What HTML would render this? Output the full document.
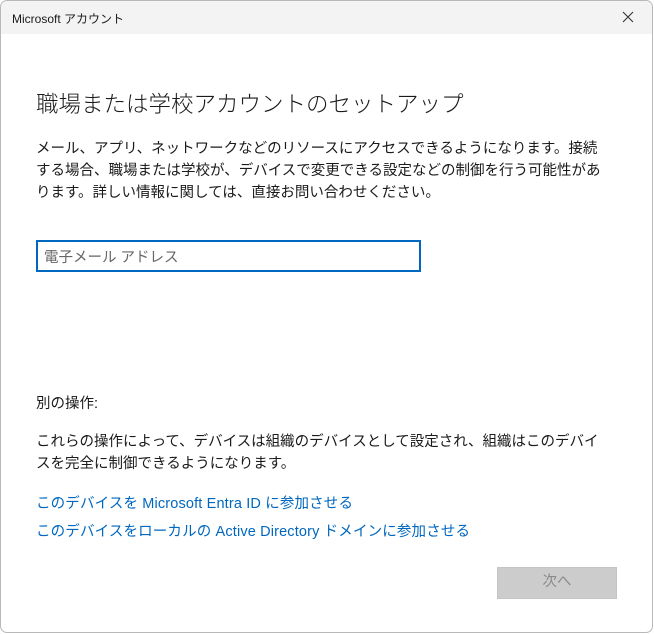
<!DOCTYPE html>
<html><head><meta charset="utf-8"><style>
*{margin:0;padding:0;box-sizing:border-box}
html,body{width:654px;height:634px;overflow:hidden;background:#fff}
body{font-family:"Liberation Sans","Noto Sans CJK JP",sans-serif;color:#1a1a1a}
.win{position:absolute;left:0;top:0;width:653px;height:633px;border:1px solid #b8b8b8;border-radius:7px;overflow:hidden;background:#fff}
.tb{height:33px;background:#f3f3f3;position:relative}
.tb span{position:absolute;left:11px;top:9px;font-size:12px;color:#1a1a1a}
.abs{position:absolute;white-space:nowrap}
.p{font-size:14.5px;line-height:22px}
a{color:#0067c0;text-decoration:none}
</style></head><body>
<div class="win">
<div class="tb"><span>Microsoft アカウント</span>
<svg style="position:absolute;right:18px;top:10px" width="12" height="12" viewBox="0 0 12 12"><path d="M1 1L11 11M11 1L1 11" stroke="#333" stroke-width="1.1"/></svg></div>
<div class="abs" style="left:35px;top:86px;font-size:22.5px;font-weight:300;color:#1a1a1a">職場または学校アカウントのセットアップ</div>
<div class="abs p" style="left:35px;top:137px">メール、アプリ、ネットワークなどのリソースにアクセスできるようになります。接続<br>する場合、職場または学校が、デバイスで変更できる設定などの制御を行う可能性があ<br>ります。詳しい情報に関しては、直接お問い合わせください。</div>
<div class="abs" style="left:35px;top:239px;width:385px;height:32px;border:2px solid #0067c0;font-size:14.5px;color:#666;padding:4px 0 0 6px">電子メール アドレス</div>
<div class="abs p" style="left:35px;top:392px">別の操作:</div>
<div class="abs p" style="left:35px;top:430px">これらの操作によって、デバイスは組織のデバイスとして設定され、組織はこのデバイ<br>スを完全に制御できるようになります。</div>
<div class="abs p" style="left:35px;top:492px;letter-spacing:0.15px"><a>このデバイスを Microsoft Entra ID に参加させる</a></div>
<div class="abs p" style="left:35px;top:520px;letter-spacing:0.15px"><a>このデバイスをローカルの Active Directory ドメインに参加させる</a></div>
<div class="abs" style="left:496px;top:566px;width:120px;height:32px;background:#cccccc;border:1px solid #c4c4c4;color:#8a8a8a;font-size:14.5px;text-align:center;line-height:29px">次へ</div>
</div>
</body></html>
